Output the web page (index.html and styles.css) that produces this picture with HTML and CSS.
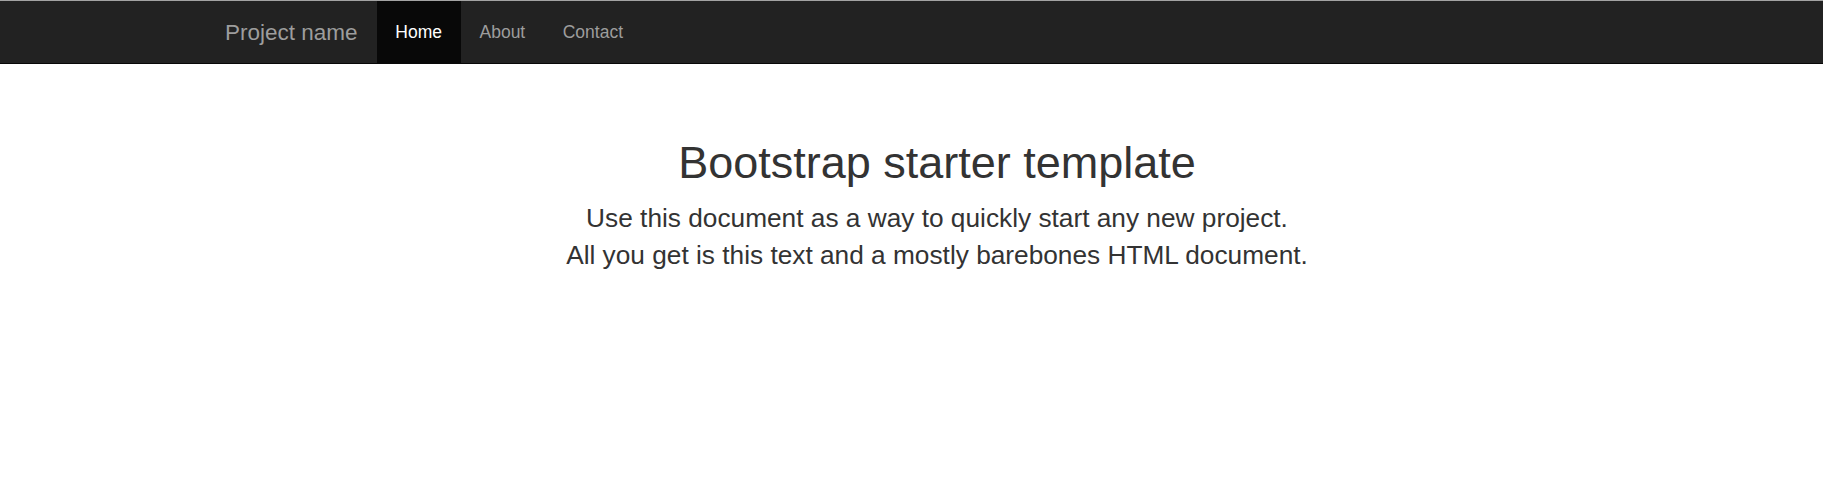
FILE: index.html
```html
<!DOCTYPE html>
<html lang="en">
<head>
<meta charset="utf-8">
<title>Starter Template for Bootstrap</title>
<link rel="stylesheet" href="styles.css">
</head>
<body>
<div class="topline"></div>
<nav class="navbar">
  <div class="container nav-container">
    <a class="brand" href="#">Project name</a>
    <ul class="nav">
      <li><a class="nav-link active" href="#">Home</a></li>
      <li><a class="nav-link" href="#about">About</a></li>
      <li><a class="nav-link" href="#contact">Contact</a></li>
    </ul>
  </div>
</nav>
<div class="container">
  <div class="starter-template">
    <h1 class="title">Bootstrap starter template</h1>
    <p class="lead">Use this document as a way to quickly start any new project.<br> All you get is this text and a mostly barebones HTML document.</p>
  </div>
</div>
</body>
</html>
```
FILE: styles.css
```css
html, body {
  margin: 0;
  padding: 0;
  background: #fff;
}
body {
  font-family: "Liberation Sans", Arial, Helvetica, sans-serif;
  font-size: 17.5px;
  line-height: 1.42857;
  color: #333;
  overflow: hidden;
}
.topline {
  height: 1px;
  background: #a3a3a3;
}
.navbar {
  background: #222;
  border-bottom: 1px solid #080808;
  height: 62px;
}
.container {
  box-sizing: border-box;
  width: 1462px;
  margin-left: 206px;
  padding: 0 19px;
}
.nav-container {
  display: flex;
  height: 62px;
}
.brand {
  margin-left: -19px;
  padding: 0 19px;
  height: 62px;
  display: flex;
  align-items: center;
  font-size: 22.5px;
  line-height: 25px;
  color: #9d9d9d;
  text-decoration: none;
}
.nav {
  display: flex;
  list-style: none;
  margin: 0;
  padding: 0;
}
.nav-link {
  display: flex;
  align-items: center;
  height: 62px;
  padding: 0 18.75px;
  font-size: 17.5px;
  line-height: 25px;
  color: #9d9d9d;
  text-decoration: none;
}
.nav-link.active {
  color: #fff;
  background: #080808;
}
.starter-template {
  padding: 49px 19px 0;
  text-align: center;
}
.title {
  margin: 25px 0 12.5px;
  font-size: 45px;
  font-weight: 500;
  line-height: 1.1;
  color: #333;
}
.lead {
  margin: 0 0 25px;
  font-size: 26.25px;
  font-weight: 300;
  line-height: 1.4;
}
```
